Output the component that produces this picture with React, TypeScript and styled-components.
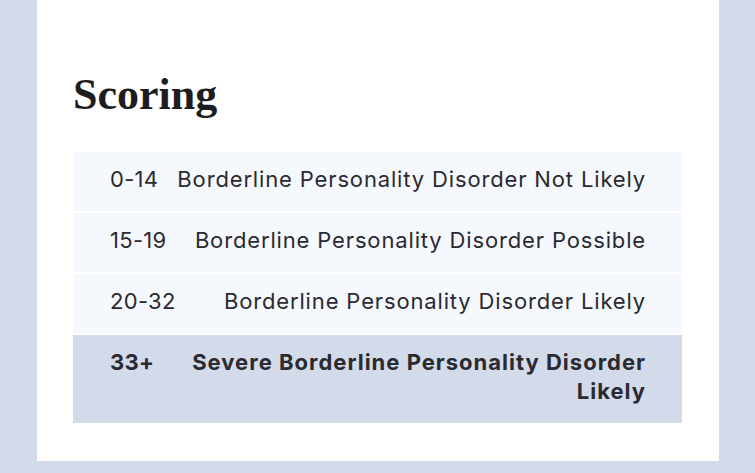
import styled, { createGlobalStyle } from "styled-components";

const GlobalStyle = createGlobalStyle`
    html, body {
        margin: 0;
        padding: 0;
        background: #d3dae9;
    }
    body {
        width: 755px;
        height: 473px;
        overflow: hidden;
    }
`;

const rows = [
    { score: "0-14", label: "Borderline Personality Disorder Not Likely" },
    { score: "15-19", label: "Borderline Personality Disorder Possible" },
    { score: "20-32", label: "Borderline Personality Disorder Likely" },
    { score: "33+", label: "Severe Borderline Personality Disorder Likely", severe: true },
];

const App = () => {
    return <Page>
        <GlobalStyle />
        <Card>
            <Title>Scoring</Title>
            <Table>
                {rows.map((row) =>
                    <Row key={row.score} $severe={!!row.severe}>
                        <Score>{row.score}</Score>
                        <Label>{row.label}</Label>
                    </Row>
                )}
            </Table>
        </Card>
    </Page>;
};

const Page = styled.div`
    width: 755px;
    height: 473px;
    padding-left: 37px;
    box-sizing: border-box;
`;

const Card = styled.div`
    width: 682px;
    height: 461px;
    background: #ffffff;
    box-sizing: border-box;
    padding: 68px 37px 0 36px;
`;

const Title = styled.h2`
    margin: 0 0 30px;
    font-family: "Liberation Serif", serif;
    font-weight: 700;
    font-size: 44px;
    line-height: 54px;
    color: #1d1d20;
    letter-spacing: 0px;
`;

const Table = styled.div`
    display: flex;
    flex-direction: column;
    gap: 2px;
    font-family: Inter, "Liberation Sans", sans-serif;
    font-size: 22px;
    line-height: 29px;
    color: #2a2a30;
`;

const Row = styled.div<{ $severe: boolean }>`
    display: grid;
    grid-template-columns: 66px 1fr;
    padding: 13px 36px 17px 37px;
    background: ${(p) => (p.$severe ? "#d3dae9" : "#f5f8fc")};
    font-weight: ${(p) => (p.$severe ? 700 : 400)};
    letter-spacing: ${(p) => (p.$severe ? "1px" : "0.85px")};
`;

const Score = styled.div`
    white-space: nowrap;
    letter-spacing: 0.3px;
`;

const Label = styled.div`
    text-align: right;
`;

export default App;
